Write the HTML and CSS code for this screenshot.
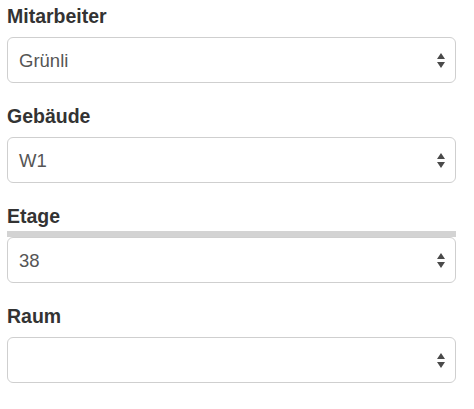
FILE: index.html
```html
<!DOCTYPE html>
<html>
<head>
<meta charset="utf-8">
<link rel="stylesheet" href="styles.css">
</head>
<body>
<form class="form">
  <div class="group">
    <label class="label">Mitarbeiter</label>
    <div class="select">
      <span class="value">Grünli</span>
      <svg class="arrows" width="8" height="15" viewBox="0 0 8 15"><path d="M4 0L8 6H0Z M0 9H8L4 15Z" fill="#4a4a4a"/></svg>
    </div>
  </div>
  <div class="group">
    <label class="label">Gebäude</label>
    <div class="select">
      <span class="value">W1</span>
      <svg class="arrows" width="8" height="15" viewBox="0 0 8 15"><path d="M4 0L8 6H0Z M0 9H8L4 15Z" fill="#4a4a4a"/></svg>
    </div>
  </div>
  <div class="group">
    <label class="label label-tight">Etage</label>
    <div class="bar"></div>
    <div class="select">
      <span class="value">38</span>
      <svg class="arrows" width="8" height="15" viewBox="0 0 8 15"><path d="M4 0L8 6H0Z M0 9H8L4 15Z" fill="#4a4a4a"/></svg>
    </div>
  </div>
  <div class="group">
    <label class="label">Raum</label>
    <div class="select">
      <span class="value"></span>
      <svg class="arrows" width="8" height="15" viewBox="0 0 8 15"><path d="M4 0L8 6H0Z M0 9H8L4 15Z" fill="#4a4a4a"/></svg>
    </div>
  </div>
</form>
</body>
</html>
```
FILE: styles.css
```css
html, body {
  margin: 0;
  padding: 0;
  background: #fff;
}
body {
  font-family: "Liberation Sans", Arial, sans-serif;
}
.form {
  display: flex;
  flex-direction: column;
  padding: 6px 18px 0 7px;
  gap: 23px;
}
.group {
  display: flex;
  flex-direction: column;
}
.label {
  display: block;
  font-size: 19.5px;
  line-height: 20px;
  font-weight: bold;
  color: #333;
  margin-bottom: 11px;
}
.label-tight {
  margin-bottom: 5px;
}
.bar {
  height: 6px;
  background: #d3d3d3;
}
.select {
  height: 44px;
  border: 1px solid #cfcfcf;
  border-radius: 6px;
  display: flex;
  align-items: center;
  justify-content: space-between;
  padding: 0 10px 0 11px;
  background: #fff;
}
.value {
  font-size: 18.5px;
  line-height: 22px;
  color: #555;
  padding-top: 1px;
}
.arrows {
  display: block;
}
```
